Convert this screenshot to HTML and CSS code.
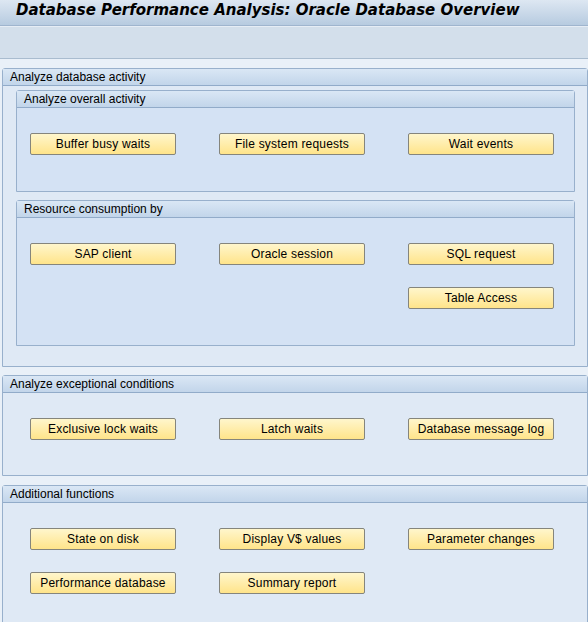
FILE: index.html
```html
<!DOCTYPE html>
<html>
<head>
<meta charset="utf-8">
<link rel="stylesheet" href="styles.css">
</head>
<body>
<header class="titlebar"><h1 class="title">Database Performance Analysis: Oracle Database Overview</h1></header>
<div class="toolbar"></div>
<main class="content">
  <section class="group g1">
    <div class="group-head">Analyze database activity</div>
    <div class="group-body outer-pad">
      <section class="group inner">
        <div class="group-head">Analyze overall activity</div>
        <div class="group-body btn-area">
          <div class="btn-grid">
            <button class="btn">Buffer busy waits</button>
            <button class="btn">File system requests</button>
            <button class="btn">Wait events</button>
          </div>
        </div>
      </section>
      <section class="group inner inner2">
        <div class="group-head">Resource consumption by</div>
        <div class="group-body btn-area">
          <div class="btn-grid">
            <button class="btn">SAP client</button>
            <button class="btn">Oracle session</button>
            <button class="btn">SQL request</button>
            <button class="btn col3">Table Access</button>
          </div>
        </div>
      </section>
    </div>
  </section>
  <section class="group g2">
    <div class="group-head">Analyze exceptional conditions</div>
    <div class="group-body btn-area wide">
      <div class="btn-grid">
        <button class="btn">Exclusive lock waits</button>
        <button class="btn">Latch waits</button>
        <button class="btn">Database message log</button>
      </div>
    </div>
  </section>
  <section class="group g3">
    <div class="group-head">Additional functions</div>
    <div class="group-body btn-area wide">
      <div class="btn-grid">
        <button class="btn">State on disk</button>
        <button class="btn">Display V$ values</button>
        <button class="btn">Parameter changes</button>
        <button class="btn">Performance database</button>
        <button class="btn">Summary report</button>
      </div>
    </div>
  </section>
</main>
</body>
</html>
```
FILE: styles.css
```css
* { box-sizing: border-box; }
html, body { margin: 0; padding: 0; }
body {
  width: 588px;
  height: 622px;
  overflow: hidden;
  background: #e9f0f8;
  font-family: "Liberation Sans", Arial, sans-serif;
  font-size: 12px;
  color: #000;
}
.titlebar {
  height: 26px;
  background: linear-gradient(#dde7f2, #b7cbe0);
  border-bottom: 1px solid #9fb5ce;
  padding-left: 16px;
}
.title {
  margin: 0;
  font-family: "DejaVu Sans", Verdana, sans-serif;
  font-weight: bold;
  font-style: italic;
  font-size: 15px;
  line-height: 20px;
  color: #000;
  white-space: nowrap;
}
.toolbar {
  height: 33px;
  background: #d3dfeb;
  border-top: 1px solid #e6edf5;
  border-bottom: 1px solid #a9bccf;
}
.content {
  padding-top: 9px;
}
.group {
  border: 1px solid #98b0cc;
  border-radius: 3px 3px 0 0;
  background: #dfe9f5;
}
.g1, .g2, .g3 {
  margin-left: 2px;
  width: 586px;
}
.g2 { margin-top: 8px; }
.g3 { margin-top: 9px; }
.group-head {
  height: 17px;
  line-height: 16px;
  padding-left: 7px;
  background: linear-gradient(#dae7f5, #c2d5ea);
  border-bottom: 1px solid #91abc9;
  white-space: nowrap;
}
.outer-pad {
  padding: 4px 12px 20px 13px;
}
.inner {
  background: #d4e2f4;
}
.inner2 { margin-top: 8px; }
.btn-area {
  padding: 25px 0 36px 13px;
}
.btn-area.wide {
  padding: 25px 0 35px 27px;
}
.btn-grid {
  display: grid;
  grid-template-columns: repeat(3, 146px);
  column-gap: 43px;
  row-gap: 22px;
}
.btn {
  height: 22px;
  margin: 0;
  padding: 1px 0 0 0;
  border: 1px solid #85857c;
  border-radius: 2px;
  background: linear-gradient(#fff6cc, #ffe48a);
  font-family: "Liberation Sans", Arial, sans-serif;
  font-size: 12px;
  letter-spacing: 0.2px;
  color: #000;
  text-align: center;
  line-height: 19px;
}
.col3 { grid-column: 3; }
```
